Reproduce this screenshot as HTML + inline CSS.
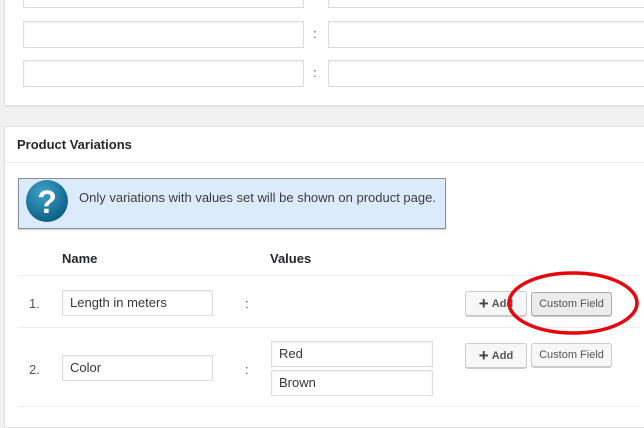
<!DOCTYPE html>
<html><head><style>
body{margin:0;width:644px;height:414px;background:#f1f1f1;font-family:"Liberation Sans",sans-serif;position:relative;overflow:hidden;color:#23282d}
.a{position:absolute}
.p{background:#fff;border:1px solid #e0e0e0;box-shadow:0 1px 1px rgba(0,0,0,.04)}
.in{position:absolute;background:#fff;border:1px solid #ddd;box-shadow:inset 0 1px 2px rgba(0,0,0,.07);box-sizing:border-box;font-size:13px;padding-left:7px;color:#32373c}
.ln{position:absolute;height:1px;background:#eee}
.btn{position:absolute;box-sizing:border-box;border:1px solid #ccc;background:#f7f7f7;border-radius:3px;box-shadow:0 1px 0 #ccc;font-size:11px;color:#555;text-align:center}
.c{position:absolute;font-size:13px;color:#555}
</style></head><body>
<div class="a p" style="left:4px;top:-5px;width:650px;height:109px"></div>
<div class="in" style="left:23px;top:-10px;width:281px;height:18px"></div>
<div class="in" style="left:328px;top:-10px;width:330px;height:18px"></div>
<div class="in" style="left:23px;top:21px;width:281px;height:27px"></div>
<div class="in" style="left:328px;top:21px;width:330px;height:27px"></div>
<div class="in" style="left:23px;top:60px;width:281px;height:27px"></div>
<div class="in" style="left:328px;top:60px;width:330px;height:27px"></div>
<div class="c" style="left:313px;top:26px">:</div>
<div class="c" style="left:313px;top:65px">:</div>

<div class="a p" style="left:4px;top:126px;width:650px;height:300px"></div>
<div class="a" style="left:17px;top:137px;font-size:13px;font-weight:bold">Product Variations</div>
<div class="ln" style="left:5px;top:162px;width:640px"></div>
<div class="a" style="left:18px;top:178px;width:426px;height:49px;background:#dcebfc;border:1px solid #8a8f94;box-shadow:0 1px 1px rgba(0,0,0,.2)"></div>
<svg class="a" style="left:25px;top:179px" width="44" height="44"><defs><radialGradient id="g" cx="40%" cy="30%" r="70%"><stop offset="0" stop-color="#3fa3c9"/><stop offset="1" stop-color="#0d5f86"/></radialGradient></defs><circle cx="22" cy="22" r="21" fill="url(#g)"/><text x="22" y="34" text-anchor="middle" font-family="Liberation Sans" font-weight="bold" font-size="32" fill="#fff">?</text></svg>
<div class="a" style="left:79px;top:190px;font-size:13px;color:#3c3c3c">Only variations with values set will be shown on product page.</div>
<div class="a" style="left:62px;top:251px;font-size:13px;font-weight:bold;color:#23282d">Name</div>
<div class="a" style="left:270px;top:251px;font-size:13px;font-weight:bold;color:#23282d">Values</div>
<div class="ln" style="left:18px;top:275px;width:622px"></div>
<div class="ln" style="left:18px;top:327px;width:622px"></div>
<div class="ln" style="left:18px;top:406px;width:622px"></div>
<div class="c" style="left:29px;top:296px">1.</div>
<div class="in" style="left:62px;top:290px;width:151px;height:26px;line-height:24px">Length in meters</div>
<div class="c" style="left:245px;top:296px">:</div>
<div class="btn" style="left:465px;top:291px;width:62px;height:25px;line-height:23px"><b style="font-size:17px;color:#444;vertical-align:-2px">+</b> <b>Add</b></div>
<div class="btn" style="left:531px;top:292px;width:81px;height:24px;line-height:22px;background:#ececec;border-color:#aaa">Custom Field</div>
<svg class="a" style="left:505px;top:270px" width="136" height="68"><ellipse cx="68" cy="33" rx="64" ry="30" fill="none" stroke="#e5070d" stroke-width="3.5"/></svg>
<div class="c" style="left:29px;top:362px">2.</div>
<div class="in" style="left:62px;top:355px;width:151px;height:26px;line-height:24px">Color</div>
<div class="c" style="left:245px;top:362px">:</div>
<div class="in" style="left:271px;top:341px;width:162px;height:26px;line-height:24px">Red</div>
<div class="in" style="left:271px;top:370px;width:162px;height:26px;line-height:24px">Brown</div>
<div class="btn" style="left:465px;top:343px;width:62px;height:25px;line-height:23px"><b style="font-size:17px;color:#444;vertical-align:-2px">+</b> <b>Add</b></div>
<div class="btn" style="left:531px;top:343px;width:81px;height:24px;line-height:22px">Custom Field</div>
</body></html>
